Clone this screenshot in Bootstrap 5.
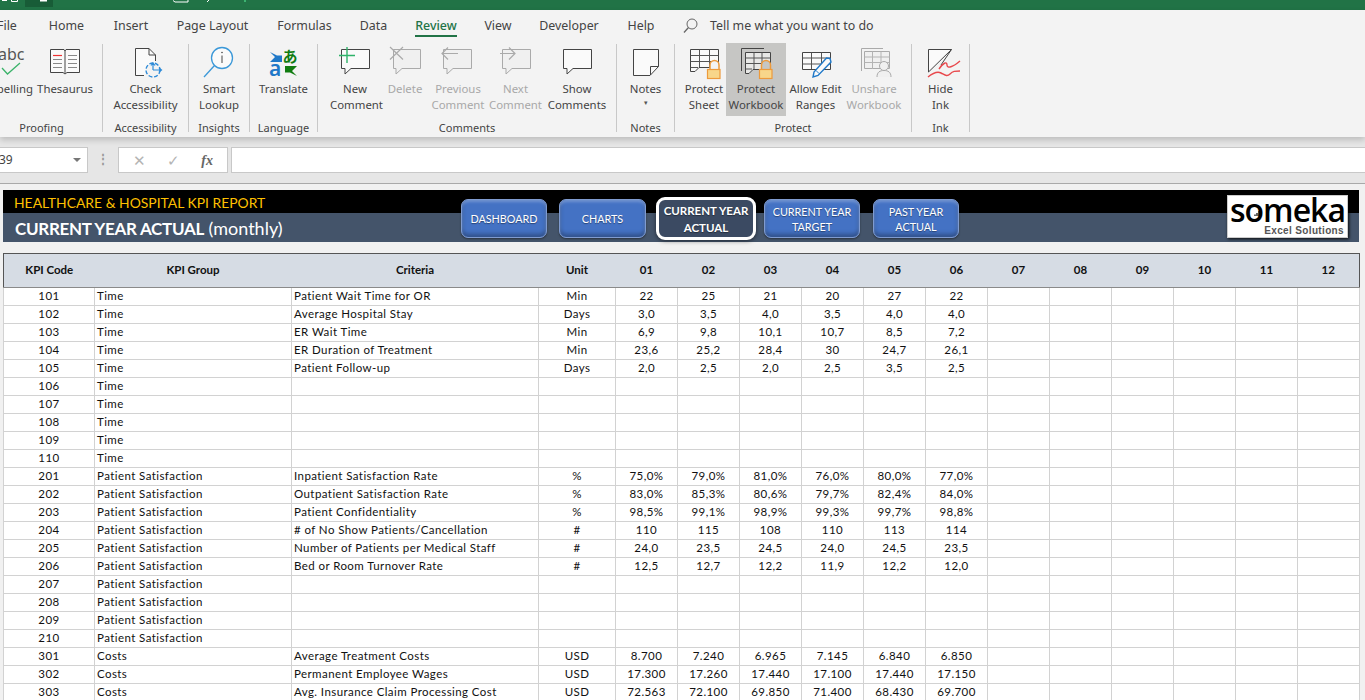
<!DOCTYPE html>
<html lang="en">
<head>
<meta charset="utf-8">
<title>Healthcare KPI Report</title>
<link href="https://cdn.jsdelivr.net/npm/bootstrap@5.3.0/dist/css/bootstrap.min.css" rel="stylesheet">
<style>
html,body{height:700px;overflow:hidden;background:#f1f1f1}
body{font-family:"Noto Sans","Liberation Sans",sans-serif;color:#444}
.xl-top{height:10px;background:#217346;display:block;width:100%}
.rb{background:#f3f3f3;height:127px;box-shadow:0 3px 6px rgba(0,0,0,.18);position:relative;z-index:2}
.tabs{display:grid;grid-template-columns:33px 67px 62px 101px 83px 55px 70px 54px 88px 56px 15px 185px;height:28px;font-size:12.4px;line-height:15px;color:#444;text-align:center;padding-top:8px}
.tabs .tb-file{text-align:left;margin-left:-3px}
.tabs .tb-on{color:#217346;font-weight:500}
.tb-on span{display:inline-block;border-bottom:2px solid #217346;padding:0 0 2px;height:19px}
.tb-tell{text-align:left;white-space:nowrap;margin-left:26px}
.tb-mag{margin-top:-1px;margin-left:14px}
.rg{border-right:1px solid #c8c8c8;height:88px;margin-top:6px;position:relative;flex:none}
.rg-b{height:73px;margin-top:-1px}
.rg-l{height:16px;line-height:16px;font-size:11px;text-align:center;margin-top:4px;color:#444;white-space:nowrap}
.g1{width:103px}.g2{width:86px}.g3{width:61px}.g4{width:68px}.g5{width:299px;padding-left:12px}.g6{width:58px}.g7{width:237px;padding-left:7px}.g8{width:58px}
.rbtn{flex:none;text-align:center;font-size:11.4px;line-height:16px;color:#444;padding-top:4px;white-space:nowrap;height:73px}
.rbtn svg{display:block;margin:0 auto 2px;width:40px;height:32px;overflow:visible}
.rbtn.off{color:#a8a8a8}
.rbtn.sel{background:#c6c6c4}
.w35{width:35px;overflow:hidden}.w58{width:58px}.w44{width:44px}.w50{width:50px}.w56{width:56px}.w59{width:59px}.w60{width:60px}.w64{width:64px}
.sp-in{display:flex;justify-content:flex-end;padding-right:2px}
.ddn{font-size:7px;line-height:12px;color:#555}
.lb-g1{margin-right:19px}.lb-g5{margin-right:12px}.lb-g7{margin-right:7px}
.fx{height:47px;background:#e6e6e6;border-bottom:1px solid #a9a9a9;padding-top:10px;gap:0}
.fx-box{height:26px;background:#fff;border:1px solid #c8c8c8;flex:none;font-size:12px}
.fx-name{width:88px;border-left:0;line-height:24px}
.fx-name span{margin-left:-1px}
.fx-tri{width:0;height:0;border-left:4px solid transparent;border-right:4px solid transparent;border-top:4px solid #777;margin-right:6px}
.fx-dots{width:30px;color:#999;font-size:12px;font-weight:700;line-height:24px;text-align:center}
.fx-btns{width:110px;margin-right:3px;color:#b4b4b4;font-size:15px;padding:0 14px}
.fx-btns i{font-family:"Liberation Serif",serif;font-weight:700;color:#666;font-size:14px}
.fx-main{flex:1 1 auto;border-right:0}
.sheet{background:#f1f1f1;padding:6px 0 0 3px;font-family:Lato,"Liberation Sans",sans-serif}
.bnr{display:grid;width:1356px;height:52px;grid-template-rows:23px 29px;grid-template-columns:1fr}
.bnr-a{grid-row:1;grid-column:1;background:#000;color:#ffc000;font-size:13.9px;line-height:26px;height:23px;padding-left:11px;overflow:hidden}
.bnr-b{grid-row:2;grid-column:1;background:#44546a;color:#fff;font-size:18px;line-height:31px;height:29px;padding-left:12px;overflow:hidden}
.bnr-b b{font-weight:700;font-size:17px;letter-spacing:-.3px}
.bnr-nav{grid-row:1/3;grid-column:1;display:flex;align-items:center;padding:5px 0 0 458px;z-index:1;height:52px}
.nbtn{height:39px;background:#4472c4;color:#fff;border:1px solid #7f9bd0;border-radius:7px;font-size:10.8px;line-height:15px;text-align:center;display:flex;align-items:center;justify-content:center;flex:none;box-shadow:inset 0 2px 3px rgba(255,255,255,.25),inset 0 -3px 4px rgba(0,0,0,.3),0 1px 2px rgba(0,0,0,.4);text-shadow:0 1px 1px rgba(0,0,0,.4)}
.nbtn.act{height:43px;background:#3b4a62;border:3px solid #fff;border-radius:9px;font-weight:700;font-size:11.5px;line-height:17px;box-shadow:0 1px 4px rgba(0,0,0,.5)}
.n1{width:86px;margin-right:12px}.n2{width:87px;margin-right:10px}.n3{width:100px;margin-right:8px}.n4{width:96px;margin-right:13px}.n5{width:86px}
.bnr-logo{grid-row:1/3;grid-column:1;justify-self:end;align-self:start;margin:5px 11px 0 0;width:121px;height:43px;background:#fff;z-index:2;box-shadow:1px 1px 3px rgba(0,0,0,.9);border:1px solid #ccc;overflow:hidden;position:relative}
.lg-a{font-family:"Open Sans",sans-serif;font-weight:600;font-size:32px;line-height:28px;height:28px;color:#000;letter-spacing:-1px;padding-left:2px;white-space:nowrap}
.lg-b{font-family:"Liberation Sans",sans-serif;font-weight:700;font-size:10px;line-height:11px;color:#555;text-align:right;padding-right:3px;letter-spacing:.35px;margin-top:1px}
.lg-c{position:absolute;left:26px;top:15px}
.kpi{table-layout:fixed;width:1357px;margin:11px 0 0;border-collapse:collapse;font-size:11.5px;color:#111;--bs-table-bg:transparent;background:#fff;border-left:1px solid #555;border-right:1px solid #555;letter-spacing:.42px}
.kpi th{height:34px;background:#d6dce4;border:0;border-top:1px solid #555;border-bottom:1px solid #8a8a8a;padding:0 0 2px;text-align:center;vertical-align:middle;font-weight:700;color:#111;font-size:11.5px;letter-spacing:0}
.kpi td{height:18px;padding:0 2px;border:1px solid #d2d2d2;line-height:16px;white-space:nowrap;overflow:hidden;text-align:center;background:#fff;color:#111;box-shadow:none}
.kpi td.tl{text-align:left}
</style>
</head>
<body>
<svg class="xl-top" viewBox="0 0 1365 10" width="1365" height="10" aria-hidden="true">
<rect x="25" y="0" width="28" height="7" fill="#185c37"/>
<rect x="2" y="0" width="5" height="1" fill="#fff"/>
<path d="M11.5 0V1.5H17.5V0" fill="none" stroke="#fff"/>
<rect x="40" y="0" width="7" height="1.5" fill="#fff"/>
<path d="M173 .5L175 2H188V0" fill="none" stroke="#fff"/>
<path d="M207 2L209 0" stroke="#fff" fill="none"/>
<rect x="244" y="0" width="2" height="2" fill="#3cb371"/>
</svg>

<div class="rb">
<nav class="tabs">
<div class="tb-file">File</div><div>Home</div><div>Insert</div><div>Page Layout</div><div>Formulas</div><div>Data</div><div class="tb-on"><span>Review</span></div><div>View</div><div>Developer</div><div>Help</div>
<div class="tb-mag"><svg width="15" height="16" viewBox="0 0 15 16"><circle cx="9" cy="6" r="5" fill="none" stroke="#666"/><path d="M5.500 9.500L1 14.500" stroke="#666" stroke-width="1.300"/></svg></div>
<div class="tb-tell">Tell me what you want to do</div>
</nav>
<div class="d-flex">

<div class="rg g1">
<div class="rg-b d-flex">
<div class="rbtn w35"><svg viewBox="0 0 35 32" style="width:35px"><text x="-2" y="13" font-family="Noto Sans,sans-serif" font-size="16" fill="#555">abc</text><path d="M2 21L7.500 27L20 16" fill="none" stroke="#3bb36a" stroke-width="1.300"/></svg><div class="sp-in">pelling</div></div>
<div class="rbtn w58" style="margin-left:1px"><svg viewBox="0 0 40 32"><path d="M5.500 2.500H19L20 4L21 2.500H34.500V25.500H22L20 27L18 25.500H5.500Z" fill="#fafafa" stroke="#444"/><path d="M20 4V26" stroke="#444"/><path d="M8 8.500H17" stroke="#e33" stroke-width="1.200"/><path d="M8 12.500H17M8 16.500H17M8 20.500H17M23 8.500H32M23 12.500H32M23 16.500H32M23 20.500H32" stroke="#888"/></svg>Thesaurus</div>
</div>
<div class="rg-l lb-g1">Proofing</div>
</div>

<div class="rg g2">
<div class="rg-b d-flex justify-content-center">
<div class="rbtn"><svg viewBox="0 0 40 32"><path d="M19 28.500H10.500V1.500H24L30.500 8V14" fill="#fafafa" stroke="#444"/><path d="M24 1.500V8H30.500" fill="none" stroke="#444"/><circle cx="28" cy="23" r="7" fill="#f3f3f3" stroke="#2e8bd8" stroke-width="1.400" stroke-dasharray="4 1.800"/><path d="M28 23V16.500M28 23H36M34 21L36.500 23L34 25M26 18.500L28 16L30 18.500" fill="none" stroke="#2e8bd8" stroke-width="1.200"/></svg>Check<br>Accessibility</div>
</div>
<div class="rg-l">Accessibility</div>
</div>

<div class="rg g3">
<div class="rg-b d-flex justify-content-center">
<div class="rbtn"><svg viewBox="0 0 40 32"><circle cx="23" cy="11" r="10.500" fill="#fafafa" stroke="#3b98d8" stroke-width="1.300"/><path d="M15.500 18.500L5 30" stroke="#3b98d8" stroke-width="1.300"/><path d="M23 8.500V16" stroke="#444"/><circle cx="23" cy="5.500" r=".8" fill="#444"/></svg>Smart<br>Lookup</div>
</div>
<div class="rg-l">Insights</div>
</div>

<div class="rg g4">
<div class="rg-b d-flex justify-content-center">
<div class="rbtn"><svg viewBox="0 0 40 32"><path d="M6 5L11 10L6 15H18V8.500H13L6 5Z" fill="#1f78c8"/><text x="5" y="29" font-family="Noto Sans,sans-serif" font-size="21" font-weight="600" fill="#1f78c8">a</text><text x="18.500" y="15" font-family="Noto Sans CJK JP,sans-serif" font-size="15" font-weight="700" fill="#107c10">あ</text><path d="M33 29L28 24L33 19H21V25.500H26L33 29Z" fill="#107c10"/></svg>Translate</div>
</div>
<div class="rg-l">Language</div>
</div>

<div class="rg g5">
<div class="rg-b d-flex">
<div class="rbtn w50"><svg viewBox="0 0 40 32"><path d="M6.500 2.500H34.500V21.500H16L10 27V21.500H6.500Z" fill="#fafafa" stroke="#444"/><path d="M4 8.500H20M12 0V16" stroke="#2fb36a" stroke-width="1.400"/></svg>New<br>Comment</div>
<div class="rbtn w50 off"><svg viewBox="0 0 40 32"><path d="M8.500 2.500H35.500V21.500H17L11 27V21.500H8.500Z" fill="#f0f0f0" stroke="#aaa"/><path d="M5 0L18 12.500M18 0L5 12.500" stroke="#aaa" stroke-width="1.200"/></svg>Delete</div>
<div class="rbtn w56 off"><svg viewBox="0 0 40 32"><path d="M5.500 2.500H33.500V21.500H15L9 27V21.500H5.500Z" fill="#f0f0f0" stroke="#aaa"/><path d="M4 6.500H20M10 0.500L4 6.500L10 12.500" fill="none" stroke="#aaa" stroke-width="1.200"/></svg>Previous<br>Comment</div>
<div class="rbtn w59 off"><svg viewBox="0 0 40 32"><path d="M6.500 2.500H34.500V21.500H16L10 27V21.500H6.500Z" fill="#f0f0f0" stroke="#aaa"/><path d="M4 6.500H19M13 0.500L19 6.500L13 12.500" fill="none" stroke="#aaa" stroke-width="1.200"/></svg>Next<br>Comment</div>
<div class="rbtn w64"><svg viewBox="0 0 40 32"><path d="M6.500 2.500H34.500V21.500H16L10 27V21.500H6.500Z" fill="#fafafa" stroke="#444"/></svg>Show<br>Comments</div>
</div>
<div class="rg-l lb-g5">Comments</div>
</div>

<div class="rg g6">
<div class="rg-b d-flex justify-content-center">
<div class="rbtn"><svg viewBox="0 0 40 32"><path d="M7.500 2.500H32.500V19.500L24 28.500H7.500Z" fill="#fafafa" stroke="#444"/><path d="M32.500 19.500H24.500V28" fill="none" stroke="#444"/></svg>Notes<div class="ddn">▾</div></div>
</div>
<div class="rg-l">Notes</div>
</div>

<div class="rg g7">
<div class="rg-b d-flex">
<div class="rbtn w44"><svg viewBox="0 0 40 32"><path d="M6.500 2.500H34.500V20.500H15L11 24.500H6.500Z" fill="#fafafa" stroke="#444"/><path d="M6.500 8.500H34.500M6.500 14.500H34.500M6.500 20.500H14M15.500 2.500V20M25.500 2.500V20" stroke="#555" fill="none"/><path d="M26 22.500V18a4.500 4.500 0 0 1 9 0V22.500" fill="#f3f3f3" stroke="#ed9a3c" stroke-width="1.500"/><rect x="23.500" y="22.500" width="12.500" height="9" fill="#f8d68a" stroke="#ed9a3c" stroke-width="1.200"/></svg>Protect<br>Sheet</div>
<div class="rbtn w60 sel"><svg viewBox="0 0 40 32"><path d="M5.500 24V1.500H28" fill="none" stroke="#444"/><path d="M9.500 5.500H34.500V22.500H17L13 26.500H9.500Z" fill="#e8e8e6" stroke="#444"/><path d="M9.500 11H34.500M9.500 16.500H34.500M9.500 22H16M18 5.500V22M26 5.500V22" stroke="#555" fill="none"/><path d="M25.500 22.500V18a4.500 4.500 0 0 1 9 0V22.500" fill="#c6c6c4" stroke="#ed9a3c" stroke-width="1.500"/><rect x="23.500" y="22.500" width="12.500" height="9" fill="#f8d68a" stroke="#ed9a3c" stroke-width="1.200"/></svg>Protect<br>Workbook</div>
<div class="rbtn w59"><svg viewBox="0 0 40 32"><path d="M6.500 5.500H34.500V22.500H6.500Z" fill="#fafafa" stroke="#444"/><path d="M6.500 11H34.500M6.500 17H34.500M15.500 5.500V22M25.500 5.500V22" stroke="#555" fill="none"/><path d="M34 11.500L30.500 11L18 25L17 30L22 28.500L35 15L34 11.500Z" fill="#fafafa" stroke="#1f78c8" stroke-width="1.400"/><path d="M20 23.500L23 26.500" stroke="#1f78c8"/></svg>Allow Edit<br>Ranges</div>
<div class="rbtn w58 off"><svg viewBox="0 0 40 32"><path d="M7.500 24V1.500H29" fill="none" stroke="#aaa"/><path d="M10.500 4.500H35.500V21.500H10.500Z" fill="#f0f0f0" stroke="#aaa"/><path d="M10.500 10H35.500M10.500 15.500H35.500M18.500 4.500V22M27 4.500V22" stroke="#b4b4b4" fill="none"/><circle cx="30" cy="19" r="4.500" fill="#f0f0f0" stroke="#aaa"/><path d="M23 30c0-5 3-6.500 7-6.500s7 1.500 7 6.500" fill="#f0f0f0" stroke="#aaa"/></svg>Unshare<br>Workbook</div>
</div>
<div class="rg-l lb-g7">Protect</div>
</div>

<div class="rg g8">
<div class="rg-b d-flex justify-content-center">
<div class="rbtn"><svg viewBox="0 0 40 32"><path d="M7.500 25V2.500H30.500Z" fill="#fafafa" stroke="#444"/><path d="M30.500 2.500L20 18" fill="none" stroke="#444"/><path d="M18 22C22 16 26 14 26 18S32 20 39 14" fill="none" stroke="#e8484c" stroke-width="1.400"/><path d="M7 30C12 26 16 24 20 26S26 30 29 27 34 24 39 24" fill="none" stroke="#e8484c" stroke-width="1.400"/></svg>Hide<br>Ink</div>
</div>
<div class="rg-l">Ink</div>
</div>

</div>
</div>

<div class="fx d-flex">
<div class="fx-box fx-name d-flex align-items-center justify-content-between"><span>39</span><i class="fx-tri"></i></div>
<div class="fx-dots">⋮</div>
<div class="fx-box fx-btns d-flex align-items-center justify-content-between"><span>✕</span><span>✓</span><i>fx</i></div>
<div class="fx-box fx-main"></div>
</div>

<main class="sheet">
<div class="bnr">
<div class="bnr-a">HEALTHCARE &amp; HOSPITAL KPI REPORT</div>
<div class="bnr-b"><b>CURRENT YEAR ACTUAL</b> (monthly)</div>
<div class="bnr-nav">
<div class="nbtn n1">DASHBOARD</div>
<div class="nbtn n2">CHARTS</div>
<div class="nbtn n3 act">CURRENT YEAR<br>ACTUAL</div>
<div class="nbtn n4">CURRENT YEAR<br>TARGET</div>
<div class="nbtn n5">PAST YEAR<br>ACTUAL</div>
</div>
<div class="bnr-logo"><div class="lg-a">someka</div><div class="lg-b">Excel Solutions</div><svg class="lg-c" width="6" height="5" viewBox="0 0 6 5" aria-hidden="true"><path d="M1 5V3.500M3 5V2M5 5V0" stroke="#000" stroke-width="1.200"/></svg></div>
</div>

<table class="table kpi">
<colgroup><col style="width:91px"><col style="width:197px"><col style="width:247px"><col style="width:77px"><col style="width:62px"><col style="width:62px"><col style="width:62px"><col style="width:62px"><col style="width:62px"><col style="width:62px"><col style="width:62px"><col style="width:62px"><col style="width:62px"><col style="width:62px"><col style="width:62px"><col style="width:62px"></colgroup>
<thead><tr><th>KPI Code</th><th>KPI Group</th><th>Criteria</th><th>Unit</th><th>01</th><th>02</th><th>03</th><th>04</th><th>05</th><th>06</th><th>07</th><th>08</th><th>09</th><th>10</th><th>11</th><th>12</th></tr></thead>
<tbody>
<tr><td>101</td><td class="tl">Time</td><td class="tl">Patient Wait Time for OR</td><td>Min</td><td>22</td><td>25</td><td>21</td><td>20</td><td>27</td><td>22</td><td></td><td></td><td></td><td></td><td></td><td></td></tr>
<tr><td>102</td><td class="tl">Time</td><td class="tl">Average Hospital Stay</td><td>Days</td><td>3,0</td><td>3,5</td><td>4,0</td><td>3,5</td><td>4,0</td><td>4,0</td><td></td><td></td><td></td><td></td><td></td><td></td></tr>
<tr><td>103</td><td class="tl">Time</td><td class="tl">ER Wait Time</td><td>Min</td><td>6,9</td><td>9,8</td><td>10,1</td><td>10,7</td><td>8,5</td><td>7,2</td><td></td><td></td><td></td><td></td><td></td><td></td></tr>
<tr><td>104</td><td class="tl">Time</td><td class="tl">ER Duration of Treatment</td><td>Min</td><td>23,6</td><td>25,2</td><td>28,4</td><td>30</td><td>24,7</td><td>26,1</td><td></td><td></td><td></td><td></td><td></td><td></td></tr>
<tr><td>105</td><td class="tl">Time</td><td class="tl">Patient Follow-up</td><td>Days</td><td>2,0</td><td>2,5</td><td>2,0</td><td>2,5</td><td>3,5</td><td>2,5</td><td></td><td></td><td></td><td></td><td></td><td></td></tr>
<tr><td>106</td><td class="tl">Time</td><td></td><td></td><td></td><td></td><td></td><td></td><td></td><td></td><td></td><td></td><td></td><td></td><td></td><td></td></tr>
<tr><td>107</td><td class="tl">Time</td><td></td><td></td><td></td><td></td><td></td><td></td><td></td><td></td><td></td><td></td><td></td><td></td><td></td><td></td></tr>
<tr><td>108</td><td class="tl">Time</td><td></td><td></td><td></td><td></td><td></td><td></td><td></td><td></td><td></td><td></td><td></td><td></td><td></td><td></td></tr>
<tr><td>109</td><td class="tl">Time</td><td></td><td></td><td></td><td></td><td></td><td></td><td></td><td></td><td></td><td></td><td></td><td></td><td></td><td></td></tr>
<tr><td>110</td><td class="tl">Time</td><td></td><td></td><td></td><td></td><td></td><td></td><td></td><td></td><td></td><td></td><td></td><td></td><td></td><td></td></tr>
<tr><td>201</td><td class="tl">Patient Satisfaction</td><td class="tl">Inpatient Satisfaction Rate</td><td>%</td><td>75,0%</td><td>79,0%</td><td>81,0%</td><td>76,0%</td><td>80,0%</td><td>77,0%</td><td></td><td></td><td></td><td></td><td></td><td></td></tr>
<tr><td>202</td><td class="tl">Patient Satisfaction</td><td class="tl">Outpatient Satisfaction Rate</td><td>%</td><td>83,0%</td><td>85,3%</td><td>80,6%</td><td>79,7%</td><td>82,4%</td><td>84,0%</td><td></td><td></td><td></td><td></td><td></td><td></td></tr>
<tr><td>203</td><td class="tl">Patient Satisfaction</td><td class="tl">Patient Confidentiality</td><td>%</td><td>98,5%</td><td>99,1%</td><td>98,9%</td><td>99,3%</td><td>99,7%</td><td>98,8%</td><td></td><td></td><td></td><td></td><td></td><td></td></tr>
<tr><td>204</td><td class="tl">Patient Satisfaction</td><td class="tl"># of No Show Patients/Cancellation</td><td>#</td><td>110</td><td>115</td><td>108</td><td>110</td><td>113</td><td>114</td><td></td><td></td><td></td><td></td><td></td><td></td></tr>
<tr><td>205</td><td class="tl">Patient Satisfaction</td><td class="tl">Number of Patients per Medical Staff</td><td>#</td><td>24,0</td><td>23,5</td><td>24,5</td><td>24,0</td><td>24,5</td><td>23,5</td><td></td><td></td><td></td><td></td><td></td><td></td></tr>
<tr><td>206</td><td class="tl">Patient Satisfaction</td><td class="tl">Bed or Room Turnover Rate</td><td>#</td><td>12,5</td><td>12,7</td><td>12,2</td><td>11,9</td><td>12,2</td><td>12,0</td><td></td><td></td><td></td><td></td><td></td><td></td></tr>
<tr><td>207</td><td class="tl">Patient Satisfaction</td><td></td><td></td><td></td><td></td><td></td><td></td><td></td><td></td><td></td><td></td><td></td><td></td><td></td><td></td></tr>
<tr><td>208</td><td class="tl">Patient Satisfaction</td><td></td><td></td><td></td><td></td><td></td><td></td><td></td><td></td><td></td><td></td><td></td><td></td><td></td><td></td></tr>
<tr><td>209</td><td class="tl">Patient Satisfaction</td><td></td><td></td><td></td><td></td><td></td><td></td><td></td><td></td><td></td><td></td><td></td><td></td><td></td><td></td></tr>
<tr><td>210</td><td class="tl">Patient Satisfaction</td><td></td><td></td><td></td><td></td><td></td><td></td><td></td><td></td><td></td><td></td><td></td><td></td><td></td><td></td></tr>
<tr><td>301</td><td class="tl">Costs</td><td class="tl">Average Treatment Costs</td><td>USD</td><td>8.700</td><td>7.240</td><td>6.965</td><td>7.145</td><td>6.840</td><td>6.850</td><td></td><td></td><td></td><td></td><td></td><td></td></tr>
<tr><td>302</td><td class="tl">Costs</td><td class="tl">Permanent Employee Wages</td><td>USD</td><td>17.300</td><td>17.260</td><td>17.440</td><td>17.100</td><td>17.440</td><td>17.150</td><td></td><td></td><td></td><td></td><td></td><td></td></tr>
<tr><td>303</td><td class="tl">Costs</td><td class="tl">Avg. Insurance Claim Processing Cost</td><td>USD</td><td>72.563</td><td>72.100</td><td>69.850</td><td>71.400</td><td>68.430</td><td>69.700</td><td></td><td></td><td></td><td></td><td></td><td></td></tr>
</tbody>
</table>
</main>
<script src="https://cdn.jsdelivr.net/npm/bootstrap@5.3.0/dist/js/bootstrap.bundle.min.js"></script>
</body>
</html>
